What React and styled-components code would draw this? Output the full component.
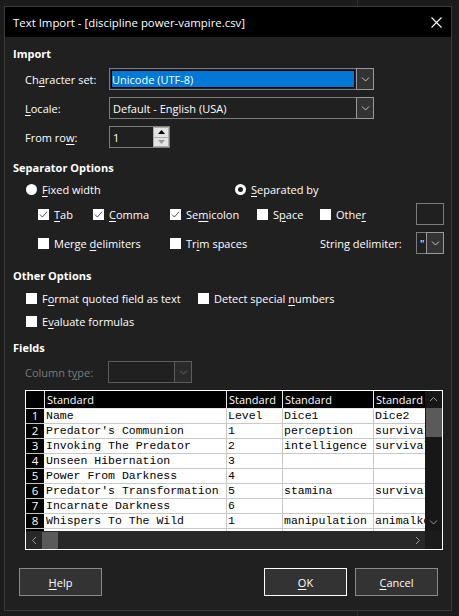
import React from "react";
import styled, { createGlobalStyle } from "styled-components";

const GlobalStyle = createGlobalStyle`
  html, body {
    margin: 0;
    padding: 0;
    background: #1c1c1c;
  }
  body {
    font-family: "Open Sans", "Noto Sans", sans-serif;
    font-size: 11px;
    color: #ffffff;
  }
`;

const Desktop = styled.div`
  width: 459px;
  height: 616px;
  box-sizing: border-box;
  padding: 6px 0 0 4px;
  overflow: hidden;
  /* edge of the pane sitting behind the dialog */
  background: linear-gradient(
    to right,
    #1c1c1c 357px,
    #2e2e2e 357px,
    #2e2e2e 358px,
    #1c1c1c 358px
  );
`;

const Window = styled.div`
  width: 448px;
  height: 605px;
  box-sizing: border-box;
  border: 1px solid #3b3b3b;
  background: #202020;
  display: flex;
  flex-direction: column;
`;

const TitleBar = styled.div`
  flex: none;
  height: 30px;
  background: #000;
  display: flex;
  align-items: center;
  justify-content: space-between;
  padding: 0 9px 0 8px;
  font-size: 11.4px;
`;

const Body = styled.div`
  flex: 1;
  display: flex;
  flex-direction: column;
  padding: 9px 0 13px 8px;
`;

const SectionTitle = styled.div`
  height: 16px;
  line-height: 16px;
  font-weight: 700;
  margin-top: ${(p) => p.$gap || 0}px;
`;

const Key = styled.span`
  text-decoration: underline;
  text-underline-offset: 2px;
`;

const FormRow = styled.div`
  display: flex;
  align-items: center;
  height: 22px;
  padding-left: 12px;
  margin-top: ${(p) => p.$gap || 0}px;
`;

const Label = styled.span`
  width: ${(p) => p.$width || 84}px;
  flex: none;
  color: ${(p) => (p.$disabled ? "#7b7b7b" : "#ffffff")};
`;

const ComboBox = styled.div`
  width: ${(p) => p.$width}px;
  height: 22px;
  display: flex;
  flex: none;
`;

const ComboField = styled.div`
  flex: 1;
  box-sizing: border-box;
  border: 1px solid ${(p) => (p.$disabled ? "#5c5c5c" : "#7c7c7c")};
  border-right: none;
  padding: 1px;
  display: flex;
  align-items: stretch;
  min-width: 0;
`;

const ComboText = styled.span`
  flex: 1;
  display: flex;
  align-items: center;
  padding-left: 2px;
  white-space: nowrap;
  overflow: hidden;
`;

const SelectedText = styled(ComboText)`
  padding-left: 0;
  background: #0078d7;
  border: 1px dotted #ffffff;
  outline: 1px solid #000;
  outline-offset: -1px;
`;

const DropButton = styled.span`
  width: 18px;
  flex: none;
  box-sizing: border-box;
  border: 1px solid ${(p) => (p.$disabled ? "#5c5c5c" : "#999999")};
  background: ${(p) => (p.$disabled ? "#2a2a2a" : "#333333")};
  display: flex;
  align-items: center;
  justify-content: center;
`;

const Chevron = ({ dir = "down", color = "#c8c8c8" }) => {
  const paths = {
    down: "M1 2.5 L4.5 6 L8 2.5",
    up: "M1 6 L4.5 2.5 L8 6",
    left: "M6 1 L2.5 4.5 L6 8",
    right: "M3 1 L6.5 4.5 L3 8",
  };
  return (
    <svg width="9" height="9" viewBox="0 0 9 9">
      <path d={paths[dir]} fill="none" stroke={color} strokeWidth="1" />
    </svg>
  );
};

function Combo({ width, value, selected, disabled }) {
  return (
    <ComboBox $width={width}>
      <ComboField $disabled={disabled}>
        {selected ? (
          <SelectedText>{value}</SelectedText>
        ) : (
          <ComboText>{value}</ComboText>
        )}
      </ComboField>
      <DropButton $disabled={disabled}>
        <Chevron color={disabled ? "#6a6a6a" : "#c8c8c8"} />
      </DropButton>
    </ComboBox>
  );
}

const SpinBox = styled.div`
  width: 61px;
  height: 22px;
  box-sizing: border-box;
  border: 1px solid #7c7c7c;
  display: flex;
  align-items: stretch;
  padding: 0 0 0 3px;
`;

const SpinValue = styled.span`
  flex: 1;
  display: flex;
  align-items: center;
`;

const SpinButtons = styled.span`
  width: 16px;
  display: flex;
  flex-direction: column;
`;

const SpinHalf = styled.span`
  flex: 1;
  box-sizing: border-box;
  background: #e3e3e3;
  border: 1px solid #adadad;
  border-top-width: ${(p) => (p.$lower ? 0 : 1)}px;
  display: flex;
  align-items: center;
  justify-content: center;
`;

const TextInput = styled.span`
  width: ${(p) => p.$width}px;
  height: 22px;
  box-sizing: border-box;
  border: 1px solid #7c7c7c;
  display: block;
`;

const RadioRow = styled.div`
  display: flex;
  align-items: center;
  height: 18px;
  padding-left: 13px;
  margin-top: 4px;
`;

const Option = styled.label`
  display: flex;
  align-items: center;
  gap: 5px;
  height: 18px;
  width: ${(p) => (p.$width ? `${p.$width}px` : "auto")};
  flex: none;
  white-space: nowrap;
  grid-column: ${(p) => p.$col || "auto"};
`;

const RadioDot = styled.span`
  width: 11px;
  height: 11px;
  box-sizing: border-box;
  border-radius: 50%;
  flex: none;
  background: ${(p) => (p.$on ? "#202020" : "#ffffff")};
  border: ${(p) => (p.$on ? "3px solid #ffffff" : "none")};
`;

const Box = styled.span`
  width: 11px;
  height: 11px;
  flex: none;
  background: #ffffff;
  display: flex;
  align-items: center;
  justify-content: center;
`;

function CheckBox({ checked, children, col, width }) {
  return (
    <Option $col={col} $width={width}>
      <Box>
        {checked && (
          <svg width="9" height="9" viewBox="0 0 9 9">
            <path
              d="M1 4.6 L3.4 7 L8 1.8"
              fill="none"
              stroke="#4a4a4a"
              strokeWidth="1"
            />
          </svg>
        )}
      </Box>
      <span>{children}</span>
    </Option>
  );
}

const SeparatorGrid = styled.div`
  display: grid;
  grid-template-columns: 55px 77px 87px 63px 96px 28px;
  grid-template-rows: 22px 22px;
  row-gap: 7px;
  align-items: center;
  padding-left: 25px;
  margin-top: 5px;
`;

const DelimiterLabel = styled.span`
  grid-column: 5;
  white-space: nowrap;
`;

const OptionsGrid = styled.div`
  display: grid;
  grid-template-columns: 172px auto;
  grid-template-rows: 18px 18px;
  row-gap: 5px;
  padding-left: 13px;
  margin-top: 5px;
`;

/* preview table */

const Preview = styled.div`
  width: 418px;
  height: 160px;
  box-sizing: border-box;
  border: 1px solid #ffffff;
  margin: 7px 0 0 12px;
  display: grid;
  grid-template-columns: 1fr 17px;
  grid-template-rows: 1fr 18px;
`;

const Viewport = styled.div`
  overflow: hidden;
  background: #202020;
`;

const TableRow = styled.div`
  display: grid;
  grid-template-columns: 19px 182px 56px 91px 91px;
  height: ${(p) => p.$height}px;
`;

const HeadCell = styled.div`
  box-sizing: border-box;
  background: #000;
  border-right: 1px solid #e6e6e6;
  border-bottom: 1px solid #e6e6e6;
  padding-left: 2px;
  line-height: 17px;
  white-space: nowrap;
  overflow: hidden;
`;

const RowNumber = styled.div`
  box-sizing: border-box;
  background: #000;
  border-right: 1px solid #ffffff;
  border-bottom: 1px solid #c4c4c4;
  font-size: 11.5px;
  line-height: 14px;
  text-align: center;
  overflow: hidden;
`;

const Cell = styled.div`
  box-sizing: border-box;
  background: #ffffff;
  color: #000;
  border-right: 1px solid #c8c8c8;
  border-bottom: 1px solid #c8c8c8;
  font-family: "Liberation Mono", "DejaVu Sans Mono", monospace;
  font-size: 11.5px;
  line-height: 14px;
  padding-left: 1px;
  white-space: nowrap;
  overflow: hidden;
`;

const VScroll = styled.div`
  background: #171717;
  display: flex;
  flex-direction: column;
`;

const HScroll = styled.div`
  background: #282828;
  display: flex;
  align-items: stretch;
`;

const ScrollArrow = styled.span`
  flex: none;
  width: ${(p) => (p.$horizontal ? "16px" : "auto")};
  height: ${(p) => (p.$horizontal ? "auto" : "17px")};
  display: flex;
  align-items: center;
  justify-content: center;
`;

const Thumb = styled.span`
  flex: none;
  background: #5a5a5a;
  ${(p) =>
    p.$horizontal
      ? "width: 16px; margin: 1px 0 0 0;"
      : "height: 29px; margin-left: 1px;"}
`;

const Spacer = styled.span`
  flex: 1;
`;

const Corner = styled.div`
  background: #1b1b1b;
`;

const Footer = styled.div`
  display: flex;
  justify-content: space-between;
  margin-top: 18px;
  padding: 0 13px 0 6px;
`;

const ButtonGroup = styled.div`
  display: flex;
  gap: 8px;
`;

const Button = styled.button`
  width: 83px;
  height: 28px;
  box-sizing: border-box;
  padding: 0;
  background: #333333;
  border: 1px solid ${(p) => (p.$default ? "#ffffff" : "#8a8a8a")};
  color: #ffffff;
  font: inherit;
`;

const rows = [
  ["Name", "Level", "Dice1", "Dice2"],
  ["Predator's Communion", "1", "perception", "survival"],
  ["Invoking The Predator", "2", "intelligence", "survival"],
  ["Unseen Hibernation", "3", "", ""],
  ["Power From Darkness", "4", "", ""],
  ["Predator's Transformation", "5", "stamina", "survival"],
  ["Incarnate Darkness", "6", "", ""],
  ["Whispers To The Wild", "1", "manipulation", "animalken"],
  ["Call The Wild", "2", "charisma", "survival"],
];

export default function App() {
  return (
    <>
      <GlobalStyle />
      <Desktop>
        <Window>
          <TitleBar>
            <span>Text Import - [discipline power-vampire.csv]</span>
            <svg width="11" height="11" viewBox="0 0 11 11">
              <path d="M0.5 0.5 L10.5 10.5 M10.5 0.5 L0.5 10.5" stroke="#fff" strokeWidth="1.1" />
            </svg>
          </TitleBar>
          <Body>
            <SectionTitle>Import</SectionTitle>
            <FormRow $gap={6}>
              <Label>
                Ch<Key>a</Key>racter set:
              </Label>
              <Combo width={265} value="Unicode (UTF-8)" selected />
            </FormRow>
            <FormRow $gap={7}>
              <Label>
                <Key>L</Key>ocale:
              </Label>
              <Combo width={265} value="Default - English (USA)" />
            </FormRow>
            <FormRow $gap={7}>
              <Label>
                From ro<Key>w</Key>:
              </Label>
              <SpinBox>
                <SpinValue>1</SpinValue>
                <SpinButtons>
                  <SpinHalf>
                    <svg width="7" height="4" viewBox="0 0 7 4">
                      <path d="M0 4 L3.5 0 L7 4 Z" fill="#000" />
                    </svg>
                  </SpinHalf>
                  <SpinHalf $lower>
                    <svg width="7" height="4" viewBox="0 0 7 4">
                      <path d="M0 0 L3.5 4 L7 0 Z" fill="#9a9a9a" />
                    </svg>
                  </SpinHalf>
                </SpinButtons>
              </SpinBox>
            </FormRow>

            <SectionTitle $gap={12}>Separator Options</SectionTitle>
            <RadioRow>
              <Option $width={209}>
                <RadioDot />
                <span>
                  <Key>F</Key>ixed width
                </span>
              </Option>
              <Option>
                <RadioDot $on />
                <span>
                  <Key>S</Key>eparated by
                </span>
              </Option>
            </RadioRow>
            <SeparatorGrid>
              <CheckBox checked>
                <Key>T</Key>ab
              </CheckBox>
              <CheckBox checked>
                <Key>C</Key>omma
              </CheckBox>
              <CheckBox checked>
                Se<Key>m</Key>icolon
              </CheckBox>
              <CheckBox>
                S<Key>p</Key>ace
              </CheckBox>
              <CheckBox>
                Othe<Key>r</Key>
              </CheckBox>
              <TextInput $width={28} />
              <CheckBox col="1 / 3">
                Merge <Key>d</Key>elimiters
              </CheckBox>
              <CheckBox col="3 / 5">
                Tr<Key>i</Key>m spaces
              </CheckBox>
              <DelimiterLabel>
                Strin<Key>g</Key> delimiter:
              </DelimiterLabel>
              <ComboBox $width={28}>
                <ComboField>
                  <ComboText>"</ComboText>
                </ComboField>
                <DropButton>
                  <Chevron />
                </DropButton>
              </ComboBox>
            </SeparatorGrid>

            <SectionTitle $gap={14}>Other Options</SectionTitle>
            <OptionsGrid>
              <CheckBox>
                F<Key>o</Key>rmat quoted field as text
              </CheckBox>
              <CheckBox>
                Detect special <Key>n</Key>umbers
              </CheckBox>
              <CheckBox>
                E<Key>v</Key>aluate formulas
              </CheckBox>
            </OptionsGrid>

            <SectionTitle $gap={10}>Fields</SectionTitle>
            <FormRow $gap={5}>
              <Label $disabled $width={83}>
                Column t<Key>y</Key>pe:
              </Label>
              <Combo width={84} value="" disabled />
            </FormRow>

            <Preview>
              <Viewport>
                <TableRow $height={18}>
                  <HeadCell />
                  <HeadCell>Standard</HeadCell>
                  <HeadCell>Standard</HeadCell>
                  <HeadCell>Standard</HeadCell>
                  <HeadCell>Standard</HeadCell>
                </TableRow>
                {rows.map((r, i) => (
                  <TableRow key={i} $height={15}>
                    <RowNumber>{i + 1}</RowNumber>
                    {r.map((v, j) => (
                      <Cell key={j}>{v}</Cell>
                    ))}
                  </TableRow>
                ))}
              </Viewport>
              <VScroll>
                <ScrollArrow>
                  <Chevron dir="up" color="#9a9a9a" />
                </ScrollArrow>
                <Thumb />
                <Spacer />
                <ScrollArrow>
                  <Chevron dir="down" color="#9a9a9a" />
                </ScrollArrow>
              </VScroll>
              <HScroll>
                <ScrollArrow $horizontal>
                  <Chevron dir="left" color="#9a9a9a" />
                </ScrollArrow>
                <Thumb $horizontal />
                <Spacer />
                <ScrollArrow $horizontal>
                  <Chevron dir="right" color="#9a9a9a" />
                </ScrollArrow>
              </HScroll>
              <Corner />
            </Preview>

            <Footer>
              <Button>
                <Key>H</Key>elp
              </Button>
              <ButtonGroup>
                <Button $default>
                  <Key>O</Key>K
                </Button>
                <Button>
                  <Key>C</Key>ancel
                </Button>
              </ButtonGroup>
            </Footer>
          </Body>
        </Window>
      </Desktop>
    </>
  );
}
